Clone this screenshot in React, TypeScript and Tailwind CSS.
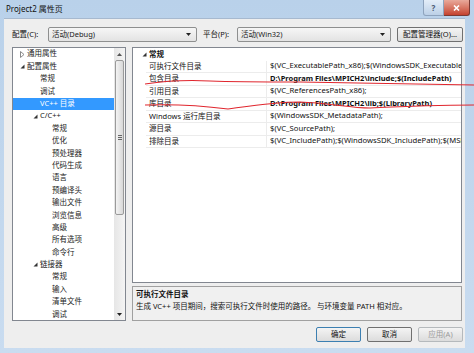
import React from "react";

type Node = { label: string; level: number; arrow?: "open" | "closed"; selected?: boolean };

const tree: Node[] = [
  { label: "通用属性", level: 0, arrow: "closed" },
  { label: "配置属性", level: 0, arrow: "open" },
  { label: "常规", level: 1 },
  { label: "调试", level: 1 },
  { label: "VC++ 目录", level: 1, selected: true },
  { label: "C/C++", level: 1, arrow: "open" },
  { label: "常规", level: 2 },
  { label: "优化", level: 2 },
  { label: "预处理器", level: 2 },
  { label: "代码生成", level: 2 },
  { label: "语言", level: 2 },
  { label: "预编译头", level: 2 },
  { label: "输出文件", level: 2 },
  { label: "浏览信息", level: 2 },
  { label: "高级", level: 2 },
  { label: "所有选项", level: 2 },
  { label: "命令行", level: 2 },
  { label: "链接器", level: 1, arrow: "open" },
  { label: "常规", level: 2 },
  { label: "输入", level: 2 },
  { label: "清单文件", level: 2 },
  { label: "调试", level: 2 },
];

const props: [string, string, boolean][] = [
  ["可执行文件目录", "$(VC_ExecutablePath_x86);$(WindowsSDK_ExecutablePath);$(VS_ExecutablePath);$(MSBuild_ExecutablePath);", false],
  ["包含目录", "D:\\Program Files\\MPICH2\\include;$(IncludePath)", true],
  ["引用目录", "$(VC_ReferencesPath_x86);", false],
  ["库目录", "D:\\Program Files\\MPICH2\\lib;$(LibraryPath)", true],
  ["Windows 运行库目录", "$(WindowsSDK_MetadataPath);", false],
  ["源目录", "$(VC_SourcePath);", false],
  ["排除目录", "$(VC_IncludePath);$(WindowsSDK_IncludePath);$(MSBuild_ExecutablePath);$(VC_LibraryPath_x86);", false],
];

const indent = ["pl-[7px]", "pl-[20px]", "pl-[32px]"];

function Arrow({ kind }: { kind: "open" | "closed" }) {
  if (kind === "closed")
    return (
      <svg width="5" height="7" viewBox="0 0 5 7">
        <path d="M0.5 0.5 L4 3.5 L0.5 6.5 Z" fill="none" stroke="#8a8a8a" strokeWidth="1" />
      </svg>
    );
  return (
    <svg width="5" height="5" viewBox="0 0 5 5">
      <path d="M4.5 0.5 L4.5 4.5 L0.5 4.5 Z" fill="#333" />
    </svg>
  );
}

function DropArrow() {
  return (
    <svg width="5" height="3" viewBox="0 0 5 3">
      <path d="M0 0 L5 0 L2.5 3 Z" fill="#222" />
    </svg>
  );
}

function Combo({ text, width }: { text: string; width: string }) {
  return (
    <div className={`${width} h-[15px] flex items-center justify-between border border-[#8e8f8f] rounded-[2px] bg-gradient-to-b from-[#f6f6f6] to-[#e3e3e3] pl-[3px] pr-[5px]`}>
      <span className="text-[7.5px] text-[#222]">{text}</span>
      <DropArrow />
    </div>
  );
}

function Button({ text, variant }: { text: string; variant?: "default" | "disabled" }) {
  const border =
    variant === "default" ? "border-[#3c7fb1]" : variant === "disabled" ? "border-[#b5b9bc]" : "border-[#707070]";
  const color = variant === "disabled" ? "text-[#9a9a9a]" : "text-[#111]";
  return (
    <div className={`w-[45px] h-[15px] flex items-center justify-center rounded-[2px] border ${border} ${color} bg-gradient-to-b from-[#f4f4f4] to-[#dcdcdc] text-[7.5px]`}>
      {text}
    </div>
  );
}

export default function App() {
  return (
    <div className="relative w-[474px] h-[353px] overflow-hidden bg-gradient-to-b from-[#b9d1ea] to-[#c9dcf0] font-['Noto_Sans','Noto_Sans_CJK_SC',sans-serif] text-[#111] flex flex-col">
      {/* title bar */}
      <div className="h-[18px] flex items-start">
        <span className="pl-[6px] pt-[3px] text-[8px] leading-[11px] text-[#111]">Project2 属性页</span>
        <div className="ml-auto mr-[4px] flex shrink-0">
          <div className="w-[21px] h-[16px] shrink-0 flex items-center justify-center rounded-bl-[3px] border border-t-0 border-[#8ea3bd] bg-gradient-to-b from-[#e3edf8] to-[#bcd0e7] text-[8px] font-bold leading-none text-[#4a5a70]">
            ?
          </div>
          <div className="w-[26px] h-[16px] shrink-0 flex items-center justify-center rounded-br-[3px] border border-t-0 border-l-0 border-[#7a3a34] bg-gradient-to-b from-[#e8a99b] to-[#c4412f]">
            <svg width="7" height="6" viewBox="0 0 7 6">
              <path d="M1 0.5 L6 5.5 M6 0.5 L1 5.5" stroke="#fff" strokeWidth="1.6" />
            </svg>
          </div>
        </div>
      </div>

      {/* client area */}
      <div className="flex-1 ml-[4px] mr-[9px] mb-[5px] bg-[#eeeeee] border-t border-[#a7b9cf] flex flex-col pl-[8px] pr-[2px] pt-[8px]">
        <div className="flex items-center h-[15px]">
          <span className="w-[36px] text-[7.5px]">配置(C):</span>
          <Combo text="活动(Debug)" width="w-[149px]" />
          <span className="ml-[6px] w-[34px] text-[7.5px]">平台(P):</span>
          <Combo text="活动(Win32)" width="w-[154px]" />
          <div className="ml-[6px] w-[66px] h-[15px] flex items-center justify-center rounded-[2px] border border-[#707070] bg-gradient-to-b from-[#f4f4f4] to-[#dcdcdc] text-[7.5px]">
            配置管理器(O)...
          </div>
        </div>

        <div className="flex mt-[5px] h-[274px]">
          {/* tree */}
          <div className="w-[114px] border border-[#828790] bg-white flex">
            <div className="flex-1">
              {tree.map((n, i) => (
                <div
                  key={i}
                  className={`h-[12.4px] flex items-center ${indent[n.level]} ${n.selected ? "bg-[#3399ff] text-white" : "text-[#222]"}`}
                >
                  <div className="w-[7px] flex items-center">{n.arrow && <Arrow kind={n.arrow} />}</div>
                  <span className="text-[7.5px] leading-none">{n.label}</span>
                </div>
              ))}
            </div>
            {/* scrollbar */}
            <div className="w-[11px] bg-gradient-to-r from-[#e6e6e6] to-[#f4f4f4] flex flex-col items-center">
              <div className="h-[12px] flex items-center justify-center">
                <svg width="5" height="3" viewBox="0 0 5 3">
                  <path d="M0 3 L5 3 L2.5 0 Z" fill="#555" />
                </svg>
              </div>
              <div className="w-[9px] h-[155px] rounded-[2px] border border-[#9a9a9a] bg-gradient-to-r from-[#f3f3f3] to-[#d8d8d8] flex items-center justify-center">
                <div className="flex flex-col gap-[1px]">
                  <div className="w-[4px] h-[1px] bg-[#666]" />
                  <div className="w-[4px] h-[1px] bg-[#666]" />
                  <div className="w-[4px] h-[1px] bg-[#666]" />
                </div>
              </div>
              <div className="flex-1" />
              <div className="h-[12px] flex items-center justify-center">
                <DropArrow />
              </div>
            </div>
          </div>

          {/* right column */}
          <div className="ml-[6px] w-[330px] flex flex-col">
            <div className="h-[236px] border border-[#828790] bg-white overflow-hidden">
              <div className="h-[12.5px] flex items-center">
                <div className="w-[16px] flex justify-end pr-[2px]">
                  <Arrow kind="open" />
                </div>
                <span className="text-[7.5px] font-bold leading-none">常规</span>
              </div>
              {props.map(([name, value, bold], i) => (
                <div key={i} className="h-[12.5px] flex">
                  <div className="w-[13px] shrink-0" />
                  <div className="w-[121px] shrink-0 flex items-center pl-[3px] border-b border-r border-[#ececec]">
                    <span className="text-[7.5px] leading-none whitespace-nowrap">{name}</span>
                  </div>
                  <div className="flex-1 min-w-0 flex items-center pl-[3px] border-b border-[#ececec] overflow-hidden">
                    <span className={`leading-none whitespace-nowrap ${bold ? "font-bold text-[7.5px]" : "text-[7.7px]"}`}>{value}</span>
                  </div>
                </div>
              ))}
            </div>
            <div className="mt-[3px] flex-1 border border-[#a0a0a0] bg-[#f0f0f0] pl-[3px] pt-[1px]">
              <div className="text-[7.5px] font-bold leading-[12px]">可执行文件目录</div>
              <div className="text-[7.5px] leading-[12px]">生成 VC++ 项目期间，搜索可执行文件时使用的路径。 与环境变量 PATH 相对应。</div>
            </div>
          </div>
        </div>

        <div className="flex justify-end gap-[6px] mt-[6px]">
          <Button text="确定" variant="default" />
          <Button text="取消" />
          <Button text="应用(A)" variant="disabled" />
        </div>
      </div>

      {/* red pen annotations */}
      <svg className="absolute inset-0 pointer-events-none" width="474" height="353" viewBox="0 0 474 353">
        <path d="M145 84 C165 81 190 80 210 81 C235 82 260 82 300 82 C350 83 410 84 474 85" fill="none" stroke="#e0262e" strokeWidth="1.1" />
        <path d="M145 105 C175 104 205 106 228 109 C250 106 275 102 300 102 C330 103 350 108 370 108 C410 106 440 105 474 105" fill="none" stroke="#e0262e" strokeWidth="1.1" />
      </svg>
    </div>
  );
}
